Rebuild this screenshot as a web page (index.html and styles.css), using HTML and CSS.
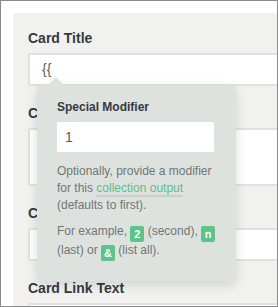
FILE: index.html
```html
<!DOCTYPE html>
<html lang="en">
<head>
    <meta charset="UTF-8">
    <meta name="viewport" content="width=device-width, initial-scale=1.0">
    <title>Card Editor</title>
    <link rel="stylesheet" href="styles.css">
</head>
<body>
    <div class="frame">
        <div class="panel">
            <div class="field">
                <label class="field-label">Card Title</label>
                <div class="field-input">{{</div>

                <div class="popover">
                    <div class="popover-label">Special Modifier</div>
                    <div class="popover-input">1</div>
                    <p class="popover-text">Optionally, provide a modifier for this <a href="#" class="link">collection output</a> (defaults to first).</p>
                    <p class="popover-text">For example, <span class="badge">2</span> (second), <span class="badge">n</span> (last) or <span class="badge">&amp;</span> (list all).</p>
                </div>
            </div>

            <div class="field">
                <label class="field-label">Card Text</label>
                <div class="field-input tall"></div>
            </div>

            <div class="field">
                <label class="field-label">Card Link</label>
                <div class="field-input"></div>
            </div>

            <div class="field">
                <label class="field-label">Card Link Text</label>
                <div class="field-input"></div>
            </div>
        </div>
    </div>
</body>
</html>
```

FILE: styles.css
```css
* {
    margin: 0;
    padding: 0;
    box-sizing: border-box;
    font-family: 'Liberation Sans', Arial, sans-serif;
}

body {
    background: #fff;
}

.frame {
    width: 278px;
    height: 307px;
    border: 1px solid #8a8a8a;
    overflow: hidden;
    background: #fff;
}

.panel {
    width: 400px;
    margin: 12px 0 0 12px;
    padding: 15px 0 0 15px;
    background-color: #f1f2f0;
    border-top-left-radius: 3px;
}

.field {
    position: relative;
    margin-bottom: 17px;
}

.field-label {
    display: block;
    font-size: 14px;
    line-height: 20px;
    font-weight: 700;
    color: #343a40;
    margin-bottom: 5px;
}

.field-input {
    height: 33px;
    background: #fff;
    border: 2px solid #dfe2df;
    border-radius: 2px;
    padding: 0 12px;
    font-size: 14px;
    line-height: 29px;
    color: #5c6360;
}

.field-input.tall {
    height: 58px;
}

.popover {
    position: absolute;
    top: 57px;
    left: 9px;
    width: 199px;
    padding: 14px 16px 20px 20px;
    background-color: #dee2df;
    border-radius: 3px;
    box-shadow: 0 4px 12px rgba(0, 0, 0, 0.13);
    z-index: 2;
}

.popover::before {
    content: '';
    position: absolute;
    top: -8px;
    left: 11px;
    border-left: 8px solid transparent;
    border-right: 8px solid transparent;
    border-bottom: 8px solid #dee2df;
}

.popover-label {
    font-size: 12px;
    line-height: 16px;
    font-weight: 700;
    color: #343a40;
    margin-bottom: 7px;
}

.popover-input {
    width: 157px;
    height: 30px;
    background: #fff;
    padding: 0 8px;
    font-size: 14px;
    line-height: 30px;
    color: #555b59;
    margin-bottom: 11px;
}

.popover-text {
    font-size: 12px;
    line-height: 17px;
    color: #707775;
}

.popover-text + .popover-text {
    margin-top: 9px;
}

.link {
    color: #5cbf86;
    text-decoration: none;
    border-bottom: 2px solid #c9cfcb;
}

.badge {
    display: inline-block;
    min-width: 14px;
    height: 16px;
    padding: 0 2px;
    background-color: #5cc48a;
    color: #fff;
    font-size: 11px;
    font-weight: 700;
    line-height: 16px;
    text-align: center;
    border-radius: 2px;
    vertical-align: -3px;
}
```
